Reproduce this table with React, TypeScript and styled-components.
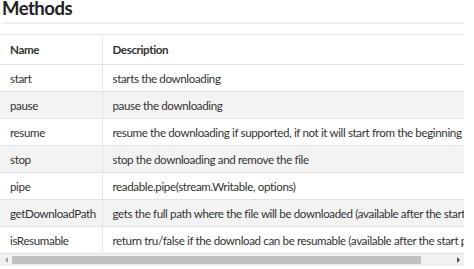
import React from "react";
import styled, { createGlobalStyle } from "styled-components";

const GlobalStyle = createGlobalStyle`
  html, body {
    margin: 0;
    padding: 0;
    background: #fff;
  }
  body {
    font-family: "Lato", "Noto Sans", sans-serif;
    color: #333;
    overflow: hidden;
  }
`;

const Page = styled.div`
  width: 464px;
`;

const Title = styled.h2`
  margin: -5px 0 0 2px;
  font-size: 18.5px;
  font-weight: 700;
  letter-spacing: -0.5px;
  line-height: 27px;
  color: #222;
  padding-bottom: 0;
  border-bottom: 2px solid #efefef;
`;

const TableWrap = styled.div`
  margin-top: 10px;
  overflow: hidden;
`;

const Table = styled.table`
  border-collapse: collapse;
  table-layout: fixed;
  width: 560px;
  font-size: 11.6px;
  letter-spacing: -0.38px;
  border-top: 1px solid #e4e4e4;
`;

const NameCol = styled.col`
  width: 102px;
`;

const Th = styled.th`
  text-align: left;
  font-weight: 700;
  height: 29px;
  padding: 0 9px 0 10px;
  border-right: 1px solid #e4e4e4;
  border-bottom: 1px solid #e4e4e4;
  white-space: nowrap;
`;

const Row = styled.tr<{ $striped: boolean }>`
  background: ${(p) => (p.$striped ? "#f3f3f3" : "#fff")};
`;

const Td = styled.td`
  height: 26px;
  padding: 0 9px 0 10px;
  border-right: 1px solid #e4e4e4;
  border-bottom: 1px solid #e4e4e4;
  white-space: nowrap;
  overflow: hidden;
`;

const ScrollBar = styled.div`
  display: flex;
  align-items: center;
  height: 12px;
  background: #f1f1f1;
`;

const Arrow = styled.div<{ $dir: "left" | "right" }>`
  width: 12px;
  height: 12px;
  display: flex;
  align-items: center;
  justify-content: center;
  &::before {
    content: "";
    border-top: 3px solid transparent;
    border-bottom: 3px solid transparent;
    ${(p) =>
      p.$dir === "left"
        ? "border-right: 3px solid #a3a3a3;"
        : "border-left: 3px solid #505050;"}
  }
`;

const Track = styled.div`
  flex: 1;
  height: 100%;
  display: flex;
  align-items: center;
`;

const Thumb = styled.div`
  width: 93%;
  height: 8px;
  background: #c1c1c1;
`;

const methods: [string, string][] = [
  ["start", "starts the downloading"],
  ["pause", "pause the downloading"],
  ["resume", "resume the downloading if supported, if not it will start from the beginning"],
  ["stop", "stop the downloading and remove the file"],
  ["pipe", "readable.pipe(stream.Writable, options)"],
  ["getDownloadPath", "gets the full path where the file will be downloaded (available after the start phase)"],
  ["isResumable", "return tru/false if the download can be resumable (available after the start phase)"],
];

const App: React.FC = () => {
  return (
    <Page>
      <GlobalStyle />
      <Title>Methods</Title>
      <TableWrap>
        <Table>
          <colgroup>
            <NameCol />
            <col />
          </colgroup>
          <thead>
            <tr>
              <Th>Name</Th>
              <Th>Description</Th>
            </tr>
          </thead>
          <tbody>
            {methods.map(([name, desc], i) => (
              <Row key={name} $striped={i % 2 === 1}>
                <Td>{name}</Td>
                <Td>{desc}</Td>
              </Row>
            ))}
          </tbody>
        </Table>
      </TableWrap>
      <ScrollBar>
        <Arrow $dir="left" />
        <Track>
          <Thumb />
        </Track>
        <Arrow $dir="right" />
      </ScrollBar>
    </Page>
  );
};

export default App;
